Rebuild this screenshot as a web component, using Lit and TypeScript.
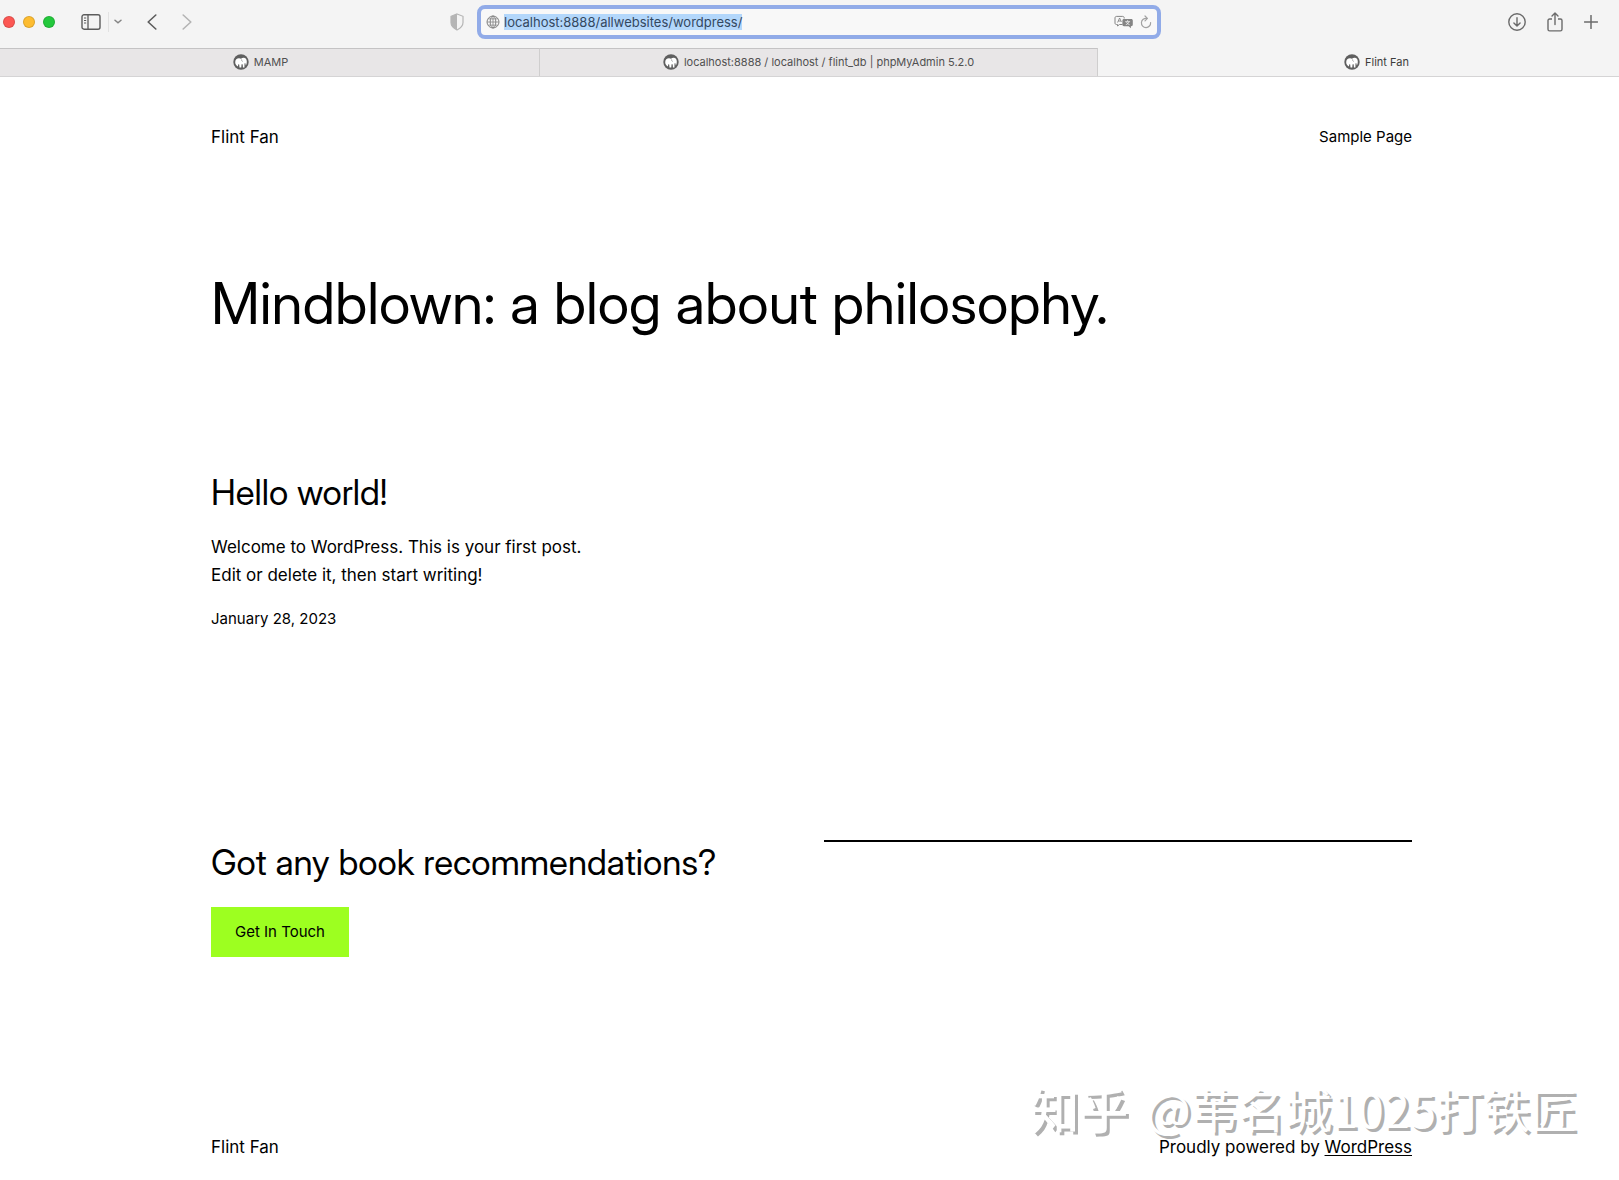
import { LitElement, html, css, svg } from "lit";
import { customElement, query } from "lit/decorators.js";

const elephant = html`<svg class="favicon" width="16" height="16" viewBox="0 0 16 16" aria-hidden="true">
  <circle cx="8" cy="8" r="7.7" fill="#5f5f5f" />
  <path
    fill="#fff"
    d="M2.200 8.200C2.200 5.600 4 4.200 6.100 4.300c.8 0 1.300.2 1.900.5C9 3.700 10.500 3.400 11.700 3.900c1.600.6 2.200 2.100 2.100 4 0 1.500-.4 2.700-1 3.600-.3-.7-.1-1.600-.5-2.300h-.7c-.2 1.300 0 2.500-.2 4.300H9.900c-.1-1.200 0-2.400-.3-3.300h-1c-.3 1-.1 2-.3 3.300H6.500c-.2-1.300-.1-2.400-.4-3.300h-.7c-.4.7-.3 1.400-.4 2.200C3.400 11.800 2.200 10.200 2.200 8.200z"
  />
  <path d="M8.600 5.400c-.2 1 .2 1.900 1.200 2" fill="none" stroke="#888" stroke-width=".7" />
</svg>`;

const icon = (w: number, h: number, body: unknown) =>
  html`<svg width=${w} height=${h} viewBox="0 0 ${w} ${h}" fill="none" stroke="currentColor" aria-hidden="true">${body}</svg>`;

const sidebarIcon = icon(20, 16, svg`
  <rect x="1" y="0.8" width="18" height="14.400" rx="2" stroke-width="1.400" />
  <path d="M7 1v14" stroke-width="1.300" />
  <path d="M3 4h2.200M3 6.500h2.200M3 9h2.200" stroke-width="1" />`);
const chevronIcon = icon(8, 6, svg`<path d="M1 1.200l3 2.600 3-2.600" stroke="#858585" stroke-width="1.500" stroke-linecap="round" />`);
const backIcon = icon(10, 16, svg`<path d="M8.800 1L1.200 8l7.600 7" stroke-width="1.600" stroke-linecap="round" stroke-linejoin="round" />`);
const forwardIcon = icon(10, 16, svg`<path d="M1.200 1l7.600 7-7.600 7" stroke-width="1.600" stroke-linecap="round" stroke-linejoin="round" />`);
const shieldIcon = icon(14, 18, svg`
  <path d="M7 1l6 2.300v6.200c0 3.500-2.700 5.800-6 7.500-3.300-1.700-6-4-6-7.500V3.300z" stroke-width="1.200" />
  <path d="M7 1v16c-3.300-1.700-6-4-6-7.500V3.300z" fill="currentColor" stroke="none" />`);
const globeIcon = icon(14, 14, svg`
  <circle cx="7" cy="7" r="6" />
  <ellipse cx="7" cy="7" rx="2.800" ry="6" />
  <path d="M7 1v12M1 7h12M2 3.900h10M2 10.100h10" stroke-width=".8" />`);
const translateIcon = icon(20, 14, svg`
  <path d="M8.500 9.500H5.500L3.500 11V9.500H2.600C1.600 9.500 1 9 1 8V3c0-1 .6-1.600 1.600-1.600h6c1 0 1.600.6 1.600 1.600v.5" />
  <path d="M3.600 7.500l2-4.500 1.800 4M4.300 6h2.500" stroke-width=".9" />
  <path d="M10 4h7.200c1 0 1.600.6 1.600 1.600v4c0 1-.6 1.600-1.600 1.600h-.3v2l-2.200-2H10c-1 0-1.600-.6-1.600-1.600v-4C8.400 4.600 9 4 10 4z" fill="currentColor" stroke="none" />
  <path d="M13.600 5.200v1.200M11.200 6.700h4.900M11.800 9.700c1.800-.6 2.700-1.600 3-2.900M12.500 7.200c.6 1.300 1.600 2.100 3.100 2.500" stroke="#f5f5f5" stroke-width=".8" />`);
const reloadIcon = icon(12, 14, svg`
  <path d="M10.600 7.500A4.600 4.600 0 1 1 6.800 3.400" stroke="#a2a2a2" stroke-linecap="round" stroke-width="1.200" />
  <path d="M5 1l2.400 2.400L5 5.800" stroke="#a2a2a2" stroke-linecap="round" stroke-linejoin="round" stroke-width="1.200" />`);
const downloadIcon = icon(18, 18, svg`
  <circle cx="9" cy="9" r="8.200" stroke-width="1.400" />
  <path d="M9 4.800v8M5.900 9.900L9 13l3.100-3.100" stroke-width="1.400" stroke-linecap="round" stroke-linejoin="round" />`);
const shareIcon = icon(16, 20, svg`
  <path d="M5 7H2.600C1.600 7 1 7.600 1 8.500v8.800c0 1 .6 1.600 1.600 1.600h10.800c1 0 1.600-.6 1.600-1.600V8.500c0-.9-.6-1.500-1.600-1.500H11" stroke-width="1.400" />
  <path d="M8 12.500V1.200M5 4l3-3 3 3" stroke-width="1.400" stroke-linecap="round" stroke-linejoin="round" />`);
const plusIcon = icon(14, 14, svg`<path d="M7 .5v13M.5 7h13" stroke-width="1.500" stroke-linecap="round" />`);

@customElement("browser-chrome")
export class BrowserChrome extends LitElement {
  static styles = css`
    :host {
      display: block;
      color: #5c5c5c;
      background: #f4f4f4;
      overflow: hidden;
    }
    .toolbar {
      display: grid;
      grid-template-columns: 477fr 684fr 458fr;
      align-items: center;
      height: 48px;
      padding-bottom: 4px;
      box-sizing: border-box;
    }
    .group {
      display: flex;
      align-items: center;
    }
    svg {
      display: block;
      flex: none;
    }
    button {
      appearance: none;
      border: 0;
      padding: 0;
      background: none;
      color: inherit;
      display: block;
    }
    .lights {
      display: flex;
      gap: 8px;
      padding-left: 3px;
      margin-right: 26px;
    }
    .light {
      width: 12px;
      height: 12px;
      border-radius: 50%;
      box-sizing: border-box;
      border: 1px solid #0002;
    }
    .red { background: #fc5753; }
    .yellow { background: #fdbc30; }
    .green { background: #23c83c; }
    .divider {
      width: 1px;
      height: 20px;
      margin: 0 5px 0 7px;
      background: #e2e2e2;
    }
    .back { margin-left: 25px; }
    .forward { margin-left: 25px; color: #b4b4b4; }
    .shield { margin-left: auto; margin-right: 13px; color: #b5b5b5; }
    .address {
      display: flex;
      align-items: center;
      height: 34px;
      box-sizing: border-box;
      border: 4px solid #91abe8;
      border-radius: 8px;
      padding: 0 5px 0 5px;
      background: #f8f8f8;
      color: #848484;
    }
    .address input {
      flex: 1;
      min-width: 0;
      border: 0;
      outline: 0;
      margin: 0 0 0 4px;
      padding: 0;
      background: none;
      color: #33485f;
      font: 13px/16px Inter, "Liberation Sans", sans-serif;
    }
    .address input::selection {
      background: #b3d7fb;
      color: #33485f;
    }
    .reload { margin-left: 6px; }
    .actions {
      justify-content: flex-end;
      gap: 21px;
      padding-right: 21px;
      color: #6b6b6b;
    }
    .tabs {
      display: grid;
      grid-template-columns: repeat(3, 1fr);
      margin: 0 -37px 0 -18px;
      height: 29px;
      box-sizing: border-box;
      border-bottom: 1px solid #d5d4d5;
    }
    .tab {
      display: flex;
      justify-content: center;
      align-items: center;
      gap: 5px;
      padding-bottom: 2px;
      font: 11px/16px Inter, "Liberation Sans", sans-serif;
      color: #505050;
      background: #e8e6e7;
      border-top: 1px solid #c4c3c4;
      border-right: 1px solid #cfcece;
      text-decoration: none;
    }
    .current {
      background: #f4f4f4;
      border-color: #f4f4f4;
      color: #3c3c3c;
    }
  `;

  @query("input") private address!: HTMLInputElement;

  firstUpdated() {
    this.address.focus();
    this.address.select();
  }

  render() {
    return html`
      <div class="toolbar">
        <div class="group">
          <div class="lights">
            <button class="light red" aria-label="Close"></button>
            <button class="light yellow" aria-label="Minimize"></button>
            <button class="light green" aria-label="Zoom"></button>
          </div>
          <button aria-label="Sidebar">${sidebarIcon}</button>
          <span class="divider"></span>
          <button aria-label="Tab groups">${chevronIcon}</button>
          <button class="back" aria-label="Back">${backIcon}</button>
          <button class="forward" aria-label="Forward">${forwardIcon}</button>
          <button class="shield" aria-label="Privacy report">${shieldIcon}</button>
        </div>
        <div class="address">
          ${globeIcon}
          <input type="text" aria-label="Address" spellcheck="false" .value=${"localhost:8888/allwebsites/wordpress/"} />
          <button aria-label="Translate">${translateIcon}</button>
          <button class="reload" aria-label="Reload">${reloadIcon}</button>
        </div>
        <div class="group actions">
          <button aria-label="Downloads">${downloadIcon}</button>
          <button aria-label="Share">${shareIcon}</button>
          <button aria-label="New tab">${plusIcon}</button>
        </div>
      </div>
      <nav class="tabs" aria-label="Tabs">
        <a class="tab" href="#mamp">${elephant}MAMP</a>
        <a class="tab" href="#phpmyadmin">${elephant}localhost:8888 / localhost / flint_db | phpMyAdmin 5.2.0</a>
        <a class="tab current" href="#site" aria-current="page">${elephant}Flint Fan</a>
      </nav>
    `;
  }
}

@customElement("app-root")
export class AppRoot extends LitElement {
  static styles = css`
    :host {
      display: flex;
      flex-direction: column;
      position: relative;
      min-height: 100vh;
      overflow: hidden;
      background: #fff;
      color: #000;
      font: 17px/28px Inter, "Liberation Sans", sans-serif;
    }
    .page {
      width: 100%;
      max-width: 1205px;
      box-sizing: border-box;
      margin: 0 auto;
      padding-left: 4px;
    }
    a { color: inherit; text-decoration: none; }
    h1, h2, p { margin: 0; font-weight: 400; }
    .bar {
      display: flex;
      justify-content: space-between;
      align-items: center;
    }
    header { padding-top: 46px; }
    .small { font-size: 15px; }
    h1, h2 { font-family: "Inter Display", Inter, "Liberation Sans", sans-serif; }
    h1 {
      margin-top: 117px;
      font-size: 57px;
      line-height: 72px;
    }
    h2 {
      font-size: 35px;
      line-height: 44px;
    }
    .columns {
      display: grid;
      grid-template-columns: 1fr 1fr;
      gap: 24px;
    }
    .post { margin-top: 130px; }
    .post p { margin-top: 19px; max-width: 384px; }
    .post .date { display: block; margin-top: 16px; }
    .contact { margin-top: 207px; }
    .cta {
      display: inline-block;
      margin-top: 23px;
      padding: 11px 24px;
      background: #9dff20;
    }
    hr {
      width: 100%;
      margin: 0;
      border: 0;
      border-top: 2px solid #000;
    }
    footer { margin-top: 176px; }
    .underlined {
      text-decoration: underline;
      text-underline-offset: 2px;
    }
    .watermark {
      position: absolute;
      right: 42px;
      bottom: 48px;
      display: flex;
      align-items: center;
      gap: 18px;
      color: #fff;
      font: 47px/48px "Noto Sans CJK SC", sans-serif;
      text-shadow: 3px 3px 0 #b0b0b0;
      white-space: nowrap;
      pointer-events: none;
    }
    .brand { font-size: 49px; font-weight: 500; }
  `;

  render() {
    return html`
      <browser-chrome></browser-chrome>
      <div class="page">
        <header class="bar">
          <a href="#home">Flint Fan</a>
          <a class="small" href="#sample-page">Sample Page</a>
        </header>
        <main>
          <h1>Mindblown: a blog about philosophy.</h1>
          <article class="post">
            <h2><a href="#hello-world">Hello world!</a></h2>
            <p>Welcome to WordPress. This is your first post. Edit or delete it, then start writing!</p>
            <a class="small date" href="#hello-world"><time datetime="2023-01-28">January 28, 2023</time></a>
          </article>
          <section class="columns contact">
            <div>
              <h2>Got any book recommendations?</h2>
              <a class="small cta" href="#contact">Get In Touch</a>
            </div>
            <hr />
          </section>
        </main>
        <footer class="bar">
          <a href="#home">Flint Fan</a>
          <p>Proudly powered by <a class="underlined" href="#wordpress">WordPress</a></p>
        </footer>
      </div>
      <div class="watermark" lang="zh-CN"><span class="brand">知乎</span><span>@苇名城1025打铁匠</span></div>
    `;
  }
}
